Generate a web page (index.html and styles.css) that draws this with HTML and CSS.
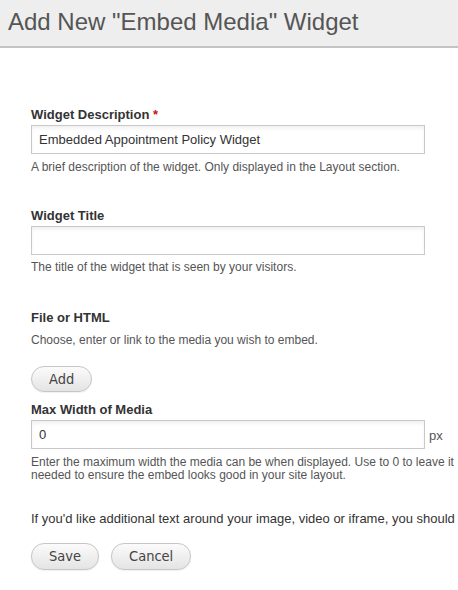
FILE: index.html
```
<!DOCTYPE html>
<html>
<head>
<meta charset="utf-8">
<title>Add New "Embed Media" Widget</title>
<link rel="stylesheet" href="styles.css">
</head>
<body>
<div class="header">
  <h1 class="title">Add New "Embed Media" Widget</h1>
</div>
<form class="form">
  <div class="field field-desc">
    <label class="label">Widget Description <span class="req">*</span></label>
    <input class="text-input" type="text" value="Embedded Appointment Policy Widget">
    <div class="help help-1">A brief description of the widget. Only displayed in the Layout section.</div>
  </div>
  <div class="field field-title">
    <label class="label">Widget Title</label>
    <input class="text-input" type="text" value="">
    <div class="help help-2">The title of the widget that is seen by your visitors.</div>
  </div>
  <div class="field field-file">
    <label class="label">File or HTML</label>
    <div class="help help-3">Choose, enter or link to the media you wish to embed.</div>
    <button type="button" class="btn btn-add">Add</button>
  </div>
  <div class="field field-width">
    <label class="label">Max Width of Media</label>
    <div class="input-row">
      <input class="text-input" type="text" value="0">
      <span class="unit">px</span>
    </div>
    <div class="help help-4">Enter the maximum width the media can be when displayed. Use to 0 to leave it<br>needed to ensure the embed looks good in your site layout.</div>
  </div>
  <p class="note">If you'd like additional text around your image, video or iframe, you should</p>
  <div class="actions">
    <button type="button" class="btn">Save</button>
    <button type="button" class="btn">Cancel</button>
  </div>
</form>
</body>
</html>
```
FILE: styles.css
```
html, body {
  margin: 0;
  padding: 0;
  overflow: hidden;
  background: #ffffff;
}
body {
  font-family: "Liberation Sans", Arial, sans-serif;
  color: #333333;
  width: 458px;
  height: 590px;
}
.header {
  background: #eeeeee;
  border-bottom: 2px solid #c4c4c4;
  height: 48px;
  box-sizing: border-box;
  padding: 8px 0 0 8px;
}
.title {
  margin: 0;
  font-size: 24px;
  line-height: 28px;
  font-weight: normal;
  color: #555555;
  white-space: nowrap;
}
.form {
  padding: 59px 0 0 31px;
  margin: 0;
  display: flex;
  flex-direction: column;
}
.field {
  display: flex;
  flex-direction: column;
  align-items: flex-start;
  min-width: 0;
}
.label {
  font-size: 13px;
  line-height: 16px;
  font-weight: bold;
  color: #333333;
  margin-bottom: 2px;
}
.req {
  color: #cc1111;
}
.text-input {
  box-sizing: border-box;
  width: 394px;
  height: 29px;
  margin: 0;
  border: 1px solid #c9c9c9;
  border-radius: 0;
  padding: 0 7px;
  font-family: "Liberation Sans", Arial, sans-serif;
  font-size: 13px;
  color: #333333;
  background: #ffffff;
  box-shadow: inset 0 3px 4px -1px rgba(0, 0, 0, 0.07);
  outline: none;
}
.help {
  font-size: 12px;
  line-height: 13px;
  color: #555555;
  margin-top: 4px;
  white-space: nowrap;
  max-width: 100%;
  overflow: hidden;
}
.help-1 {
  margin-top: 7px;
}
.help-2 {
  margin-top: 6px;
}
.field-title {
  margin-top: 34px;
}
.field-file {
  margin-top: 36px;
}
.help-3 {
  margin-top: 6px;
}
.btn {
  box-sizing: border-box;
  height: 26px;
  padding: 0 17px;
  border: 1px solid #c6c6c6;
  border-radius: 13px;
  background: linear-gradient(#fbfbfb, #e4e4e4);
  box-shadow: 0 1px 1px rgba(0, 0, 0, 0.06);
  font-family: "DejaVu Sans Condensed", "DejaVu Sans", sans-serif;
  font-size: 14.5px;
  line-height: 24px;
  color: #444444;
  cursor: pointer;
}
.btn-add {
  margin-top: 19px;
}
.field-width {
  margin-top: 10px;
}
.input-row {
  display: flex;
  align-items: center;
  gap: 4px;
}
.unit {
  font-size: 13px;
  color: #555555;
  padding-top: 2px;
}
.help-4 {
  margin-top: 7px;
  align-self: stretch;
}
.note {
  margin: 29px 0 0 0;
  font-size: 13px;
  line-height: 16px;
  color: #333333;
  white-space: nowrap;
  overflow: hidden;
}
.actions {
  display: flex;
  gap: 12px;
  margin-top: 16px;
}
.actions .btn {
  height: 27px;
  line-height: 25px;
}
```
